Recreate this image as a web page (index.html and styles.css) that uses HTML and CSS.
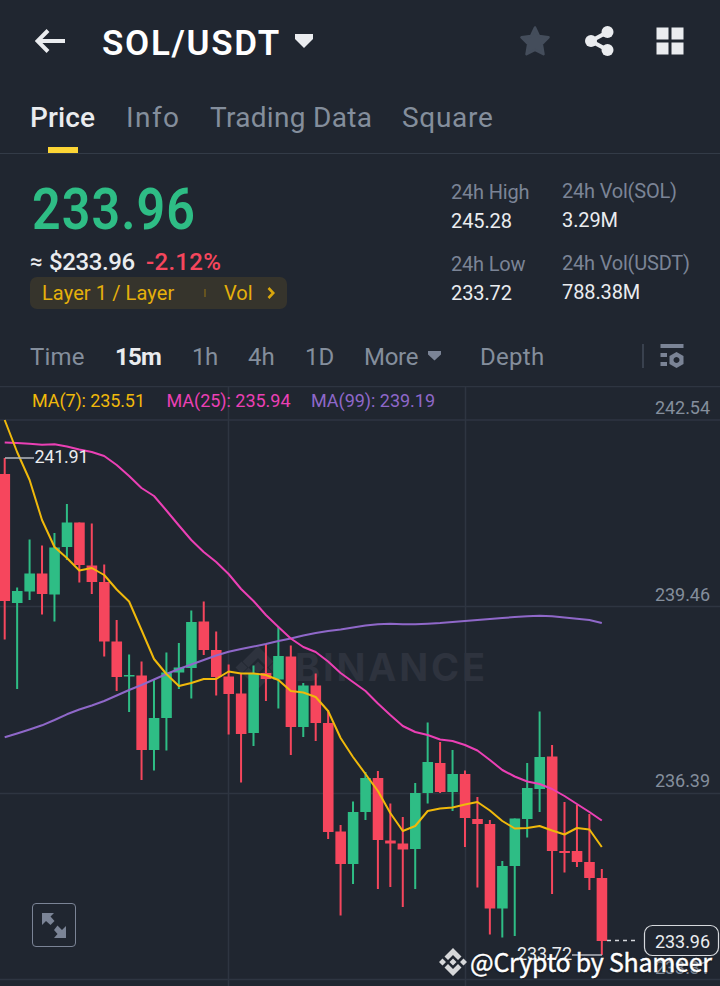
FILE: index.html
```html
<!DOCTYPE html>
<html lang="en">
<head>
  <meta charset="UTF-8" />
  <title>SOL/USDT</title>
  <link rel="stylesheet" href="styles.css">
</head>
<body>

  <header class="topbar">
    <svg class="back" width="30" height="24" viewBox="0 0 30 24">
      <path d="M30 12H3M13 1.500L2.500 12L13 22.500" fill="none" stroke="#eaecef" stroke-width="4" />
    </svg>
    <h1>SOL/USDT</h1>
    <svg class="caret" width="18" height="14" viewBox="0 0 18 14"><path d="M0 0H18V5L9 14L0 5Z" fill="#eaecef" /></svg>
    <div class="actions">
      <svg width="30" height="30" viewBox="0 0 30 30">
        <path d="M15 1.500L19 10L28.500 11.300L21.800 18L23.500 28.200L15 24L6.500 28.200L8.200 18L1.500 11.300L11 10Z" fill="#444d5b" stroke="#444d5b" stroke-width="2.500" stroke-linejoin="round" />
      </svg>
      <svg width="30" height="30" viewBox="0 0 30 30">
        <path d="M22.500 6L6 15L22.500 24" fill="none" stroke="#eaecef" stroke-width="4" />
        <circle cx="22.500" cy="6" r="6" fill="#eaecef" />
        <circle cx="6" cy="15" r="6" fill="#eaecef" />
        <circle cx="22.500" cy="24" r="6" fill="#eaecef" />
      </svg>
      <svg width="28" height="28" viewBox="0 0 28 28">
        <path d="M.5.500h12v12H.5zM15.500.500h12v12h-12zM.5 15.500h12v12H.5zM15.500 15.500h12v12h-12z" fill="#eaecef" />
      </svg>
    </div>
  </header>

  <nav class="tabs">
    <a class="tab active t-price">Price</a>
    <a class="tab t-info">Info</a>
    <a class="tab t-trading">Trading Data</a>
    <a class="tab t-square">Square</a>
  </nav>

  <section class="summary">
    <div class="price-box">
      <div class="price">233.96</div>
      <div class="sub"><span class="approx">≈</span><span class="usd">$233.96</span><span class="change">-2.12%</span></div>
      <div class="tags">
        <span class="layer">Layer 1 / Layer</span>
        <i class="sep"></i>
        <span>Vol</span>
        <svg width="8" height="12" viewBox="0 0 8 12"><path d="M1.500 1L6.300 6L1.500 11" fill="none" stroke="#d9a60c" stroke-width="2.600" /></svg>
      </div>
    </div>
    <div class="stats">
      <div class="stat"><label>24h High</label><b>245.28</b></div>
      <div class="stat"><label>24h Low</label><b>233.72</b></div>
    </div>
    <div class="stats volume">
      <div class="stat"><label>24h Vol(SOL)</label><b>3.29M</b></div>
      <div class="stat"><label>24h Vol(USDT)</label><b>788.38M</b></div>
    </div>
  </section>

  <nav class="intervals">
    <a class="i-time">Time</a>
    <a class="i-15 active">15m</a>
    <a class="i-1h">1h</a>
    <a class="i-4h">4h</a>
    <a class="i-1d">1D</a>
    <a class="i-more">More</a>
    <svg class="more-caret" width="13" height="10" viewBox="0 0 13 10"><path d="M0 0H13V3.500L6.500 9.500L0 3.500Z" fill="#7b8496" /></svg>
    <a class="i-depth">Depth</a>
    <i class="divider"></i>
    <svg width="24" height="25" viewBox="0 0 24 25">
      <path d="M.5 0h23v4H.5zM.5 9h6.500v4H.5zM.5 18h6.500v4H.5z" fill="#7b8496" />
      <path fill-rule="evenodd" d="M16.500 8L23.500 12V20L16.500 24L9.500 20V12ZM16.500 13a3 3 0 1 0 .01 0Z" fill="#7b8496" />
    </svg>
  </nav>

  <main class="chart">
    <svg id="chart" width="720" height="600" viewBox="0 386 720 600">
      <g class="grid">
        <path d="M0 386.500H720M0 420H720M0 606.500H720M0 793.500H720M0 979.500H720" />
        <path d="M228.500 386V986M465.500 386V986" />
      </g>
      <g class="brand">
        <path d="M258 646L273.500 661.500L267.500 667.500L258 658L248.500 667.500L242.500 661.500ZM241.500 661.500L247.500 667.500L241.500 673.500L235.500 667.500ZM258 661.500L264 667.500L258 673.500L252 667.500ZM274.500 661.500L280.500 667.500L274.500 673.500L268.500 667.500ZM242.500 673.500L248.500 667.500L258 677L267.500 667.500L273.500 673.500L258 689Z" />
        <text x="295" y="681" textLength="190">BINANCE</text>
      </g>
      <g id="candles"></g>
      <g id="averages"></g>
      <g class="legend">
        <text class="ma7" x="32" y="407" textLength="113">MA(7): 235.51</text>
        <text class="ma25" x="166.500" y="407" textLength="124">MA(25): 235.94</text>
        <text class="ma99" x="311" y="407" textLength="124">MA(99): 239.19</text>
      </g>
      <g class="axis">
        <text x="655" y="414" textLength="55">242.54</text>
        <text x="655" y="601" textLength="55">239.46</text>
        <text x="655" y="787" textLength="55">236.39</text>
        <text x="655" y="974" textLength="55">233.31</text>
      </g>
      <g class="extremes">
        <path d="M5 458H34M572 955H602" />
        <text x="34.500" y="463" textLength="54">241.91</text>
        <text x="517" y="960" textLength="55">233.72</text>
      </g>
      <path class="last-line" d="M607 940.500H637" />
      <rect class="last-box" x="644.500" y="925.500" width="74" height="30" rx="8" />
      <text class="last" x="655" y="948" textLength="55">233.96</text>
    </svg>

    <button class="expand">
      <svg width="24" height="25" viewBox="0 0 24 25">
        <path d="M0 0H12L8.500 3.500L12.500 8L8.500 12L4 8L0 12ZM24 25H12L15.500 21L12 17L15.500 12.500L20 17L24 13Z" fill="#7b8496" />
      </svg>
    </button>

    <div class="credit">
      <svg width="28" height="28" viewBox="0 0 28 28">
        <path d="M14 0L22.500 8.500L19 12L14 7L9 12L5.500 8.500ZM3.500 10.500L7 14L3.500 17.500L0 14ZM14 10.500L17.500 14L14 17.500L10.500 14ZM24.500 10.500L28 14L24.500 17.500L21 14ZM5.500 19.500L9 16L14 21L19 16L22.500 19.500L14 28Z" fill="#d6d7d9" />
      </svg>
      <span>@Crypto by Shameer</span>
    </div>
  </main>

  <script src="chart.js"></script>

</body>
</html>
```
FILE: styles.css
```css
* {
  box-sizing: border-box;
}

body {
  margin: 0;
  width: 720px;
  height: 986px;
  overflow: hidden;
  background: #202630;
  color: #eaecef;
  font-family: Roboto, sans-serif;
}

svg {
  display: block;
  flex-shrink: 0;
}

a, span, b, label, h1 {
  white-space: nowrap;
}

/* Header */
.topbar {
  display: flex;
  align-items: center;
  height: 82px;
  padding: 0 36px 0 35px;
}

.topbar h1 {
  margin: 4px 0 0 37px;
  width: 178px;
  font-size: 35px;
  font-weight: 600;
  letter-spacing: 1.7px;
  color: #fff;
}

.caret {
  margin-left: 15px;
}

.actions {
  display: flex;
  align-items: center;
  gap: 35px;
  margin-left: auto;
}

.actions svg:last-child {
  margin-left: 6px;
}

/* Tabs */
.tabs {
  display: flex;
  gap: 31px;
  height: 72px;
  padding: 17px 30px 0;
  border-bottom: 1px solid #333b47;
}

.tab {
  font-size: 28px;
  line-height: 38px;
  font-weight: 450;
  letter-spacing: 0.7px;
  color: #848e9c;
}

.t-price { width: 65px; }
.t-info { width: 53px; letter-spacing: 1.4px; }
.t-trading { width: 161px; letter-spacing: 0.3px; }

.tab.active {
  font-weight: 500;
  letter-spacing: 0.1px;
  color: #eaecef;
}

.tab.active::after {
  content: "";
  display: block;
  width: 30px;
  height: 6px;
  margin: 10px 0 0 18px;
  background: #fcd535;
}

/* Price summary */
.summary {
  display: flex;
  height: 172px;
  padding: 24px 0 0 30px;
}

.price-box {
  width: 421px;
}

.price {
  padding-left: 2px;
  font-size: 57px;
  line-height: 63px;
  font-weight: 600;
  letter-spacing: 1.2px;
  color: #2ebd85;
  transform: scaleX(0.88);
  transform-origin: 2px 0;
}

.sub {
  display: flex;
  margin-top: 5px;
  font-size: 24px;
  line-height: 32px;
  font-weight: 500;
}

.approx {
  width: 19px;
  font-size: 22px;
}

.usd {
  width: 97px;
  letter-spacing: -0.4px;
}

.change {
  color: #f6465d;
  letter-spacing: 0.3px;
}

.tags {
  display: flex;
  align-items: center;
  width: 257px;
  height: 32px;
  margin-top: -1px;
  padding: 0 12px;
  border-radius: 7px;
  background: #36342c;
  color: #e5b00b;
  font-size: 20px;
}

.layer {
  width: 133px;
  letter-spacing: 0.1px;
}

.sep {
  width: 2px;
  height: 8px;
  margin: 0 18px 0 29px;
  background: #65531f;
}

.tags svg {
  margin-left: auto;
}

.stats {
  width: 111px;
  padding-top: 2px;
}

.volume {
  padding-top: 1px;
}

.stat {
  display: flex;
  flex-direction: column;
  height: 72px;
}

.stat label {
  font-size: 20px;
  line-height: 25px;
  letter-spacing: -0.2px;
  color: #7b8496;
}

.stat b {
  margin-top: 3px;
  font-size: 20px;
  line-height: 26px;
  font-weight: 450;
  letter-spacing: -0.1px;
}

/* Interval bar */
.intervals {
  display: flex;
  align-items: center;
  height: 60px;
  padding-left: 30px;
  font-size: 24px;
  color: #848e9c;
}

.intervals a {
  padding-top: 2px;
}

.intervals .active {
  font-weight: 700;
  letter-spacing: -0.8px;
  color: #eaecef;
}

.i-time { width: 85px; letter-spacing: 0.2px; }
.i-15 { width: 77px; }
.i-1h { width: 56px; letter-spacing: -0.4px; }
.i-4h { width: 57px; }
.i-1d { width: 59px; }
.i-more { width: 64px; letter-spacing: -0.3px; }
.i-depth { width: 162px; letter-spacing: 0.3px; }

.more-caret {
  margin-right: 39px;
}

.divider {
  width: 2px;
  height: 24px;
  margin-right: 16px;
  background: #39414e;
}

/* Chart */
.chart {
  position: relative;
  height: 600px;
}

#chart {
  font-size: 18px;
}

.grid path {
  fill: none;
  stroke: #2e3541;
  stroke-width: 1.5;
}

.brand {
  fill: #2e333e;
  font-family: Inter, sans-serif;
  font-size: 38px;
  font-weight: 700;
}

.up { fill: #2ebd85; }
.down { fill: #f6465d; }

.line {
  fill: none;
  stroke-width: 2;
  stroke-linejoin: round;
}

.line.ma7 { stroke: #f0b90b; }
.line.ma25 { stroke: #eb40b5; }
.line.ma99 { stroke: #8f68c9; }

text.ma7 { fill: #f0b90b; }
text.ma25 { fill: #eb40b5; }
text.ma99 { fill: #8f68c9; }

.axis { fill: #848e9c; }
.extremes text, .last { fill: #eaecef; }

.extremes path {
  stroke: #b3b7bd;
  stroke-width: 1.3;
}

.last-line {
  stroke: #d5d8dc;
  stroke-width: 1.3;
  stroke-dasharray: 4 4;
}

.last-box {
  fill: #202630;
  stroke: #d5d8dc;
  stroke-width: 1.2;
}

.expand {
  position: absolute;
  left: 32px;
  top: 517px;
  display: flex;
  align-items: center;
  justify-content: center;
  width: 44px;
  height: 44px;
  padding: 0;
  border: 1px solid #7b8496;
  border-radius: 4px;
  background: none;
}

.credit {
  position: absolute;
  left: 439px;
  top: 558px;
  display: flex;
  align-items: center;
  gap: 3px;
  height: 36px;
  color: #fff;
  font-family: "Noto Sans CJK SC", sans-serif;
  font-size: 25px;
  font-weight: 400;
  line-height: 34px;
  letter-spacing: -0.27px;
  -webkit-text-stroke: 0.4px #fff;
  text-shadow: 0 1px 2px rgba(0, 0, 0, 0.5);
}

.credit span {
  margin-top: -3px;
}
```
FILE: chart.js
```js
// [direction, high, open/close top, open/close bottom, low]
const candles = [
  ['d', 458, 474, 601, 639.5], ['u', 587.5, 591, 603, 689], ['u', 539.5, 573.5, 591.5, 600],
  ['d', 545.5, 573.5, 594, 614.5], ['u', 533, 547.5, 594.5, 621.5], ['u', 504, 522.5, 547, 560],
  ['d', 522.5, 522.5, 565, 582.5], ['d', 523.5, 565.5, 582, 594], ['d', 564.5, 582, 641.5, 656.5],
  ['d', 620, 641.5, 677, 691], ['u', 654.5, 675, 676.5, 712], ['d', 661.5, 675.5, 750, 780],
  ['u', 680, 718, 750, 770.5], ['u', 652.5, 672.5, 718, 750.5], ['u', 643, 667.5, 672.5, 689],
  ['u', 610.5, 622, 668, 698.5], ['d', 601.5, 621.5, 650, 655], ['d', 631.5, 650, 677, 695.5],
  ['d', 664.5, 676.5, 694, 734.5], ['d', 674, 693.5, 734, 782.5], ['u', 665.5, 674, 733, 746],
  ['d', 644, 673, 679, 701], ['u', 627, 656, 679.5, 708.5], ['d', 645.5, 656.5, 727, 755],
  ['u', 683, 685.5, 727, 737], ['d', 673.5, 685.5, 723, 741], ['d', 710, 723, 832, 839],
  ['d', 825, 831.5, 864, 915.5], ['u', 801.5, 812, 864, 884], ['u', 772, 778, 812, 820],
  ['d', 771, 778, 840, 889], ['d', 803.5, 840.5, 843.5, 887], ['d', 817, 843.5, 849.5, 907],
  ['u', 783, 793, 849, 889], ['u', 722.5, 762, 793, 803.5], ['d', 742, 763, 792, 793],
  ['u', 750, 774, 792, 811], ['d', 770.5, 774, 818, 847], ['d', 797, 819, 824, 887.5],
  ['d', 820, 824, 908.5, 934.5], ['u', 861, 866, 908.5, 937.5], ['u', 818.5, 818.5, 866, 936],
  ['u', 763, 788, 819, 837.5], ['u', 711.5, 757, 789, 812], ['d', 745, 756.5, 851, 894],
  ['d', 802, 851, 853, 872.5], ['d', 805, 851, 862, 867], ['d', 814, 862, 878, 890],
  ['d', 869, 878, 941, 955]
];

const averages = {
  ma99: [737.3, 733.5, 729.5, 725.3, 720, 714.3, 709.5, 705.5, 701, 695.5, 690, 685, 679.5, 674, 669, 664.5, 660, 655.5, 651.7, 649, 646.5, 644, 641, 638.5, 635.5, 633, 631, 629.5, 627.5, 625.5, 624.3, 623.7, 624.3, 624.2, 623.7, 623, 622, 621, 620, 619, 618, 617, 616.3, 615.7, 616.3, 617.5, 618.7, 620, 623],
  ma25: [442.5, 443, 443.7, 444.7, 444.3, 446.5, 449.5, 452, 456, 465, 476, 488, 496, 510.5, 525.5, 540, 552, 562, 574, 589, 601, 615, 627, 638.5, 647, 652, 661.5, 673, 682, 691, 703.5, 715, 726, 732, 735, 739.5, 741, 745, 750.5, 760, 770, 776.5, 781.5, 784, 789, 796, 804, 812, 820.5],
  ma7: [420, 452, 480, 520, 547, 558, 570.5, 568, 575, 589.5, 601.5, 630, 659, 674, 686, 683, 679, 679, 671.5, 673.5, 673.5, 675, 680, 691, 692.5, 697, 711, 738, 757, 774, 791, 813, 831, 826, 811, 808.5, 807.5, 804.5, 802, 810.5, 821, 828.5, 828, 826, 830.5, 834.5, 828, 829.5, 847]
};

const NS = 'http://www.w3.org/2000/svg';
const xAt = i => 4.7 + i * 12.44;

function add(parent, tag, attrs) {
  const el = document.createElementNS(NS, tag);
  for (const key in attrs) el.setAttribute(key, attrs[key]);
  parent.appendChild(el);
}

const candleGroup = document.getElementById('candles');
candles.forEach(([dir, high, top, bottom, low], i) => {
  const cls = dir === 'u' ? 'up' : 'down';
  add(candleGroup, 'rect', { class: cls, x: xAt(i) - 1, y: high, width: 2, height: low - high });
  add(candleGroup, 'rect', { class: cls, x: xAt(i) - 5.2, y: top, width: 10.6, height: bottom - top });
});

const lineGroup = document.getElementById('averages');
for (const name in averages) {
  const points = averages[name].map((y, i) => xAt(i).toFixed(1) + ',' + y).join(' ');
  add(lineGroup, 'polyline', { class: 'line ' + name, points });
}
```
